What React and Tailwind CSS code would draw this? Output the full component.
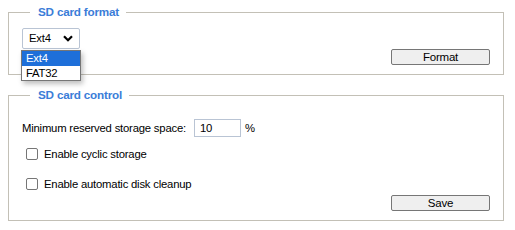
import React from 'react'

function Legend({ children }) {
  return (
    <legend className="ml-[8px] pl-[8px] pr-[7px] text-[11.7px] leading-[14px] font-bold text-[#3b7dd8]">
      {children}
    </legend>
  )
}

function Button({ children }) {
  return (
    <button className="w-[99px] h-[16px] border border-[#767676] bg-[#efefef] rounded-[2px] text-[11.5px] leading-[14px] text-black">
      {children}
    </button>
  )
}

function Checkbox({ label, className }) {
  return (
    <label className={'flex items-center h-[14px] ' + className}>
      <span className="ml-[4px] w-[12px] h-[12px] border border-[#767676] rounded-[2px] bg-white" />
      <span className="ml-[6px]">{label}</span>
    </label>
  )
}

export default function App() {
  return (
    <div className="w-[515px] h-[230px] bg-white text-[11.3px] tracking-[-0.2px] text-black pt-[5px]" style={{ fontFamily: '"Liberation Sans", Arial, sans-serif' }}>
      <fieldset className="relative ml-[8px] w-[496px] border border-[#c3c0b6] px-[13px] pt-[9px] pb-[9px]">
        <Legend>SD card format</Legend>
        <div className="flex items-center justify-between w-[58px] h-[21px] border border-[#b9c4d4] rounded-[2px] pl-[6px] pr-[6px]">
          <span>Ext4</span>
          <svg width="10" height="7" viewBox="0 0 10 7">
            <path d="M1 1.2 L5 5.2 L9 1.2" stroke="#000" strokeWidth="2.2" fill="none" />
          </svg>
        </div>
        <div className="flex justify-end">
          <Button>Format</Button>
        </div>
        <div className="absolute left-[12px] top-[31px] w-[60px] border border-[#767676] bg-white shadow-[2px_3px_5px_rgba(0,0,0,0.25)]">
          <div className="h-[15px] leading-[15px] pl-[4px] bg-[#1e6fd9] text-white">Ext4</div>
          <div className="h-[14px] leading-[14px] pl-[4px]">FAT32</div>
        </div>
      </fieldset>

      <fieldset className="mt-[13px] ml-[8px] w-[496px] border border-[#c3c0b6] px-[13px] pt-[17px] pb-[9px]">
        <Legend>SD card control</Legend>
        <div className="flex items-center h-[18px]">
          <span>Minimum reserved storage space:</span>
          <div className="ml-[8px] w-[47px] h-[18px] border border-[#b9c4d4] pl-[5px] leading-[16px]">10</div>
          <span className="ml-[4px]">%</span>
        </div>
        <Checkbox label="Enable cyclic storage" className="mt-[10px]" />
        <Checkbox label="Enable automatic disk cleanup" className="mt-[16px]" />
        <div className="flex justify-end mt-[4px]">
          <Button>Save</Button>
        </div>
      </fieldset>
    </div>
  )
}
